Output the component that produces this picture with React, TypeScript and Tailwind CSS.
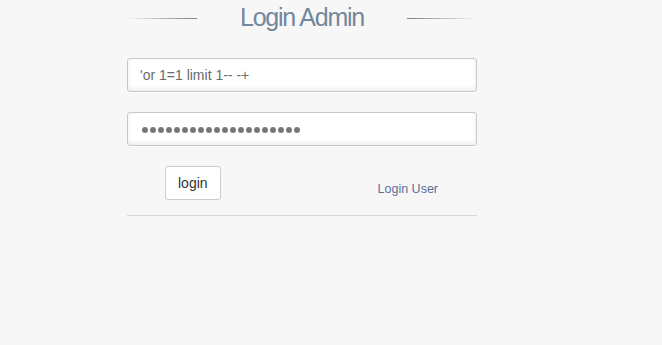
import React from "react";

const inputCls =
  "h-[34px] w-full rounded-[3px] border border-[#c8c8c8] bg-white px-[12px] text-[14px] text-[#6b6b6b] shadow-[0_1px_0_#fff,inset_0_-2px_5px_rgba(0,0,0,0.08)] outline-none";

export default function App() {
  return (
    <div className="min-h-[345px] w-full bg-[#f7f7f7] font-['Liberation_Sans',Arial,sans-serif]">
      <div className="w-[350px] ml-[127px] pt-[7px]">
        <div className="flex items-start">
          <div className="mt-[11px] h-px w-[70px] bg-gradient-to-r from-[#f7f7f7] to-[#7e7e7e]" />
          <h1 className="flex-1 text-center text-[25px] leading-[20px] tracking-[-0.05em] text-[#73879c] h-[20px]">
            Login Admin
          </h1>
          <div className="mt-[11px] h-px w-[70px] bg-gradient-to-r from-[#7e7e7e] to-[#f7f7f7]" />
        </div>

        <div className="mt-[31px] flex flex-col gap-[20px]">
          <div className={inputCls + " flex items-center"}>
            <span>'or 1=1 limit 1-- -+</span>
          </div>
          <div className={inputCls + " flex items-center pl-[14px] pt-[2px]"} aria-label="password">
            <div className="flex gap-[2px]">
              {Array.from({ length: 20 }).map((_, i) => (
                <span key={i} className="block h-[6px] w-[6px] rounded-full bg-[#777]" />
              ))}
            </div>
          </div>
        </div>

        <div className="mt-[20px] flex items-start justify-between">
          <button className="ml-[38px] h-[34px] rounded-[3px] border border-[#ccc] bg-white px-[12px] text-[14px] text-[#333]">
            login
          </button>
          <a className="mr-[39px] mt-[14px] text-[12.5px] text-[#5b6f98]">Login User</a>
        </div>

        <div className="mt-[15px] border-t border-[#d8d8d8]" />
      </div>
    </div>
  );
}
